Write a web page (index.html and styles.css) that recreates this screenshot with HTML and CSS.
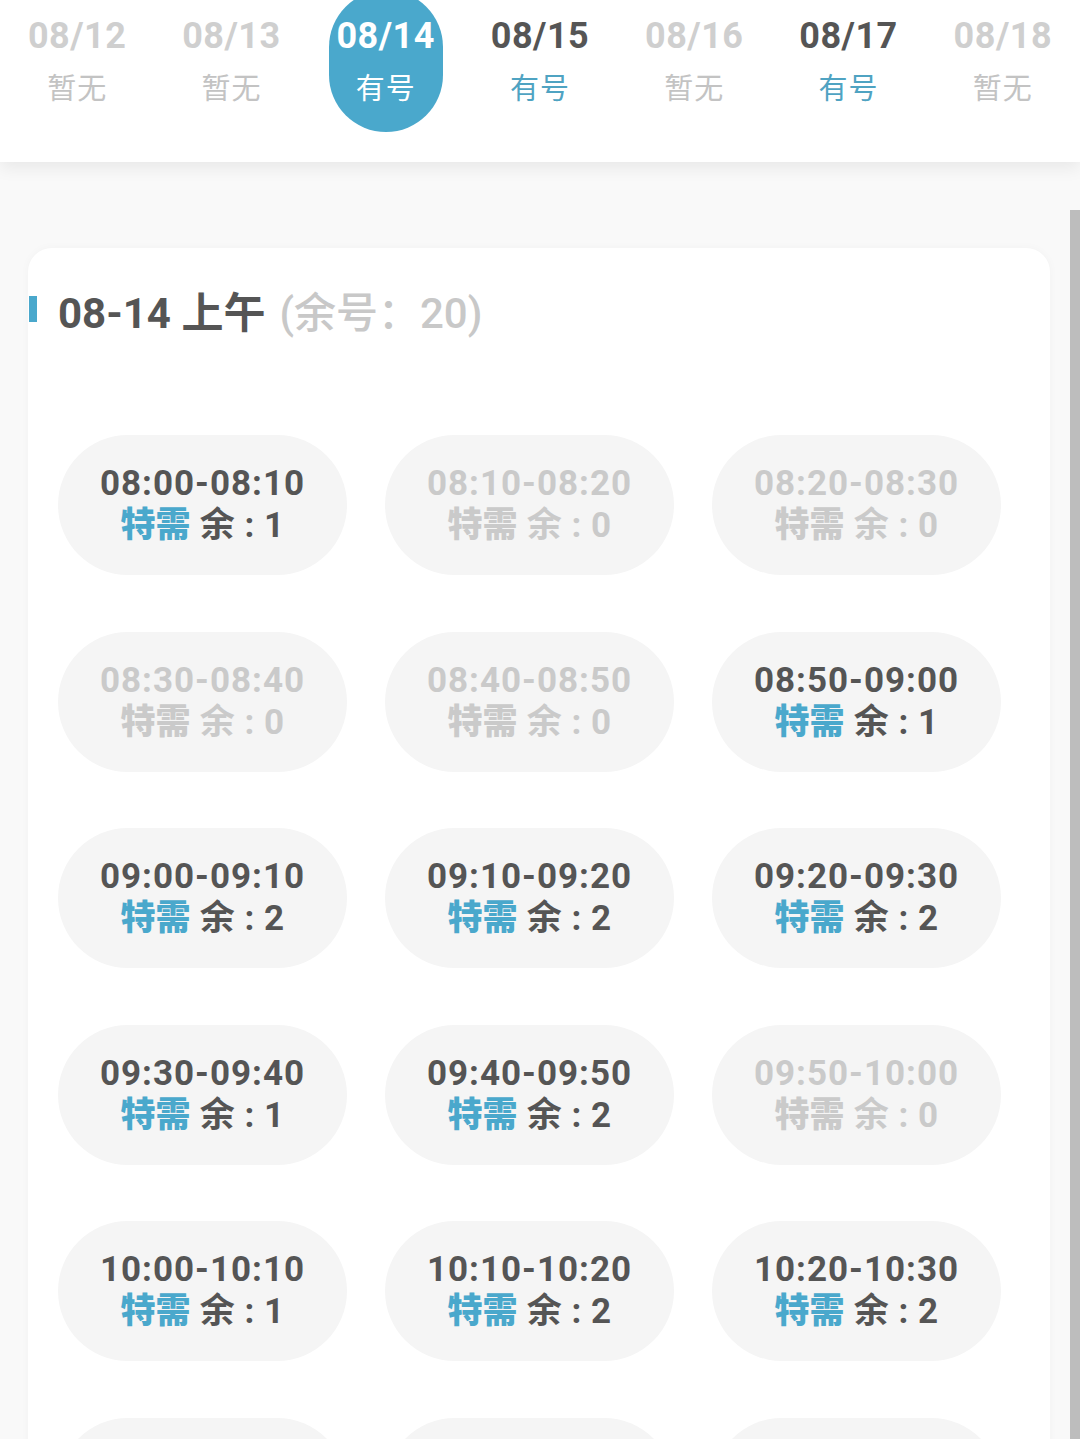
FILE: index.html
```html
<!DOCTYPE html>
<html lang="zh-CN">
<head>
<meta charset="utf-8">
<title>预约</title>
<link rel="stylesheet" href="styles.css">
</head>
<body>
<header class="dates">
  <div class="date-col"><div class="date none"><span class="day">08/12</span><span class="status">暂无</span></div></div>
  <div class="date-col"><div class="date none"><span class="day">08/13</span><span class="status">暂无</span></div></div>
  <div class="date-col"><div class="date selected"><span class="day">08/14</span><span class="status">有号</span></div></div>
  <div class="date-col"><div class="date avail"><span class="day">08/15</span><span class="status">有号</span></div></div>
  <div class="date-col"><div class="date none"><span class="day">08/16</span><span class="status">暂无</span></div></div>
  <div class="date-col"><div class="date avail"><span class="day">08/17</span><span class="status">有号</span></div></div>
  <div class="date-col"><div class="date none"><span class="day">08/18</span><span class="status">暂无</span></div></div>
</header>
<main class="content">
  <section class="card">
    <h2 class="title"><span class="bar"></span><span class="title-main">08-14 上午</span><span class="title-sub">(余号：20)</span></h2>
    <div class="slots">
      <div class="slot"><span class="time">08:00-08:10</span><span class="info"><b class="tag">特需</b> 余 : 1</span></div>
      <div class="slot off"><span class="time">08:10-08:20</span><span class="info"><b class="tag">特需</b> 余 : 0</span></div>
      <div class="slot off"><span class="time">08:20-08:30</span><span class="info"><b class="tag">特需</b> 余 : 0</span></div>
      <div class="slot off"><span class="time">08:30-08:40</span><span class="info"><b class="tag">特需</b> 余 : 0</span></div>
      <div class="slot off"><span class="time">08:40-08:50</span><span class="info"><b class="tag">特需</b> 余 : 0</span></div>
      <div class="slot"><span class="time">08:50-09:00</span><span class="info"><b class="tag">特需</b> 余 : 1</span></div>
      <div class="slot"><span class="time">09:00-09:10</span><span class="info"><b class="tag">特需</b> 余 : 2</span></div>
      <div class="slot"><span class="time">09:10-09:20</span><span class="info"><b class="tag">特需</b> 余 : 2</span></div>
      <div class="slot"><span class="time">09:20-09:30</span><span class="info"><b class="tag">特需</b> 余 : 2</span></div>
      <div class="slot"><span class="time">09:30-09:40</span><span class="info"><b class="tag">特需</b> 余 : 1</span></div>
      <div class="slot"><span class="time">09:40-09:50</span><span class="info"><b class="tag">特需</b> 余 : 2</span></div>
      <div class="slot off"><span class="time">09:50-10:00</span><span class="info"><b class="tag">特需</b> 余 : 0</span></div>
      <div class="slot"><span class="time">10:00-10:10</span><span class="info"><b class="tag">特需</b> 余 : 1</span></div>
      <div class="slot"><span class="time">10:10-10:20</span><span class="info"><b class="tag">特需</b> 余 : 2</span></div>
      <div class="slot"><span class="time">10:20-10:30</span><span class="info"><b class="tag">特需</b> 余 : 2</span></div>
      <div class="slot"></div>
      <div class="slot"></div>
      <div class="slot"></div>
    </div>
  </section>
  <div class="scrollbar"></div>
</main>
</body>
</html>
```
FILE: styles.css
```css
* { box-sizing: border-box; }
html, body {
  margin: 0;
  padding: 0;
  width: 1080px;
  height: 1439px;
  overflow: hidden;
  background: #f9f9f9;
  font-family: Roboto, "Noto Sans CJK SC", sans-serif;
}
.dates {
  position: relative;
  z-index: 2;
  height: 162px;
  background: #fff;
  display: flex;
  box-shadow: 0 6px 16px rgba(0,0,0,0.07);
}
.date-col {
  flex: 1;
  display: flex;
  justify-content: center;
}
.date {
  width: 114px;
  display: flex;
  flex-direction: column;
  align-items: center;
  padding-top: 15px;
}
.date.selected {
  margin-top: -10px;
  padding-top: 25px;
  height: 142px;
  border-radius: 57px;
  background: #4aa8cc;
}
.day {
  font-size: 36px;
  font-weight: 700;
  line-height: 42px;
  letter-spacing: 0.5px;
}
.status {
  margin-top: 9px;
  font-family: "Noto Sans CJK SC", sans-serif;
  font-size: 29px;
  line-height: 40px;
  letter-spacing: 1px;
}
.none .day { color: #cfcfcf; }
.none .status { color: #c3c3c3; }
.avail .day { color: #555; }
.avail .status { color: #4fa3c2; }
.selected .day, .selected .status { color: #fff; }

.content {
  position: relative;
  padding: 86px 30px 0 28px;
}
.card {
  background: #fff;
  border-radius: 24px 24px 0 0;
  padding-top: 31px;
  height: 1300px;
  box-shadow: 0 0 10px rgba(0,0,0,0.03);
}
.title {
  margin: 0;
  display: flex;
  align-items: center;
  height: 60px;
  font-size: 42px;
  font-weight: 700;
  font-family: Roboto, "Noto Sans CJK SC", sans-serif;
}
.bar {
  width: 8px;
  height: 26px;
  margin-left: 1px;
  margin-right: 21px;
  background: #4aa8cc;
}
.title-main { color: #555; }
.title-sub {
  color: #c8c8c8;
  margin-left: 14px;
  font-weight: 500;
}
.slots {
  margin-top: 96px;
  padding-left: 30px;
  display: grid;
  grid-template-columns: repeat(3, 289px);
  column-gap: 38px;
  row-gap: 56.5px;
}
.slot {
  height: 140px;
  border-radius: 70px;
  background: #f5f5f5;
  display: flex;
  flex-direction: column;
  align-items: center;
  justify-content: center;
  color: #555;
}
.time {
  font-size: 35px;
  font-weight: 700;
  line-height: 44px;
  letter-spacing: 1px;
}
.info {
  font-family: Roboto, "Noto Sans CJK SC", sans-serif;
  font-size: 35px;
  font-weight: 700;
  line-height: 44px;
  margin-top: -2px;
  letter-spacing: 0.5px;
}
.tag {
  color: #4aa8cc;
  font-weight: 900;
  letter-spacing: 0;
}
.slot.off { color: #cacaca; }
.slot.off .tag { color: #cacaca; }
.scrollbar {
  position: absolute;
  right: 0;
  top: 48px;
  width: 10px;
  height: 1300px;
  background: #bdbdbd;
}
```
